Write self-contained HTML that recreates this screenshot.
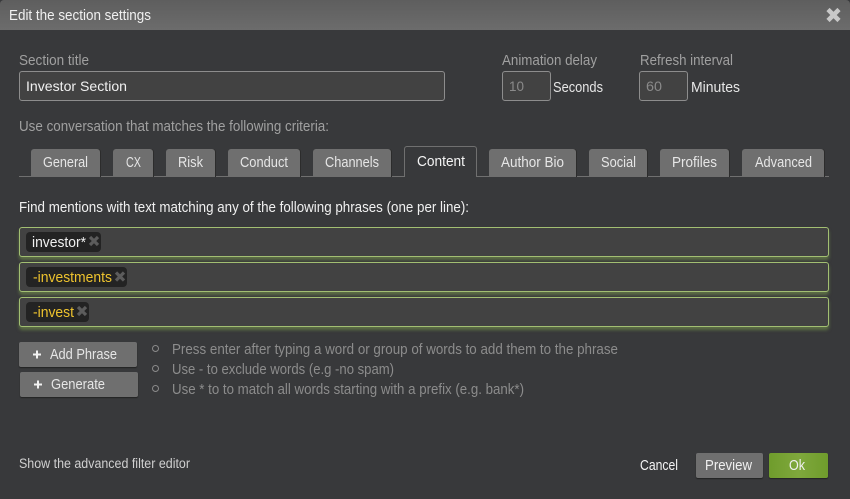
<!DOCTYPE html>
<html><head><meta charset="utf-8"><style>
html,body{margin:0;padding:0;width:850px;height:499px;overflow:hidden;background:#38393b}
.a{position:absolute;box-sizing:border-box}
.hd{left:0;top:0;width:850px;height:30px;background:linear-gradient(#5e5e5e,#6c6c6c);border-radius:4px 4px 0 0}
.in{border:1px solid #8d8d8d;background:#424242;border-radius:3px;height:30px;top:71px}
.tab{top:149px;height:28px;background:#6f6f6f;border-radius:3px 3px 0 0;box-shadow:1px 0 0 #2c2c2c}
.ph{left:19px;width:810px;height:30px;background:#424242;border:1px solid #a2bf72;border-radius:3px;box-shadow:0 3px 3px rgba(130,165,80,.5)}
.chip{left:26px;height:20px;background:#232323;border-radius:4px}
.btn{background:#6f6f6f;border-radius:2px;box-shadow:0 1px 1px #222}
.dot{width:7px;height:7px;border:1.5px solid #8a8a8a;border-radius:50%;left:152px}
svg{position:absolute;left:0;top:0}
text{font-family:"Liberation Sans",sans-serif;font-size:14.5px}
</style></head><body>
<div class="a hd"></div>
<div class="a in" style="left:19px;width:426px"></div>
<div class="a in" style="left:502px;width:49px"></div>
<div class="a in" style="left:639px;width:49px"></div>
<div class="a" style="left:19px;top:176px;width:810px;height:1px;background:#707070"></div>
<div class="a tab" style="left:31px;width:69px"></div>
<div class="a tab" style="left:113px;width:40px"></div>
<div class="a tab" style="left:166px;width:49px"></div>
<div class="a tab" style="left:228px;width:72px"></div>
<div class="a tab" style="left:313px;width:78px"></div>
<div class="a" style="left:404px;top:146px;width:73px;height:31px;background:#38393b;border:1px solid #707070;border-bottom:0;border-radius:3px 3px 0 0"></div>
<div class="a tab" style="left:489px;width:87px"></div>
<div class="a tab" style="left:589px;width:58px"></div>
<div class="a tab" style="left:660px;width:69px"></div>
<div class="a tab" style="left:742px;width:82px"></div>
<div class="a ph" style="top:227px"></div>
<div class="a ph" style="top:262px"></div>
<div class="a ph" style="top:297px"></div>
<div class="a chip" style="top:232px;width:75px"></div>
<div class="a chip" style="top:267px;width:101px"></div>
<div class="a chip" style="top:302px;width:63px"></div>
<div class="a btn" style="left:19px;top:342px;width:118px;height:25px"></div>
<div class="a btn" style="left:20px;top:372px;width:118px;height:25px"></div>
<div class="a dot" style="top:345px"></div>
<div class="a dot" style="top:365px"></div>
<div class="a dot" style="top:385px"></div>
<div class="a btn" style="left:696px;top:453px;width:67px;height:25px"></div>
<div class="a btn" style="left:769px;top:453px;width:59px;height:25px;background:linear-gradient(90deg,#6f9c2c,#7fa83c,#6f9c2c)"></div>
<svg width="850" height="499" viewBox="0 0 850 499">
<g stroke-linecap="butt" fill="none">
<path d="M828 9.500L839 20.500M839 9.500L828 20.500" stroke="#c8c8c8" stroke-width="4.500"/>
<path d="M90 237L98 245M98 237L90 245M116 272.500L124 280.500M124 272.500L116 280.500M78 307L86 315M86 307L78 315" stroke="#5c5c5c" stroke-width="3.200"/>
<path d="M33 354.500H41M37 350.500V358.500M34 384.500H42M38 380.500V388.500" stroke="#f2f2f2" stroke-width="2"/>
</g>
<g fill="#e6e6e6">
<text x="9" y="20" textLength="142" lengthAdjust="spacingAndGlyphs" fill="#f0f0f0">Edit the section settings</text>
<text x="19" y="65" textLength="70" lengthAdjust="spacingAndGlyphs" fill="#a0a0a0">Section title</text>
<text x="26" y="91" textLength="101" lengthAdjust="spacingAndGlyphs" style="font-size:14px" fill="#f0f0f0">Investor Section</text>
<text x="502" y="65" textLength="95" lengthAdjust="spacingAndGlyphs" fill="#a0a0a0">Animation delay</text>
<text x="640" y="65" textLength="93" lengthAdjust="spacingAndGlyphs" fill="#a0a0a0">Refresh interval</text>
<text x="509" y="91" textLength="15" lengthAdjust="spacingAndGlyphs" style="font-size:14px" fill="#8a8a8a">10</text>
<text x="646" y="91" textLength="16" lengthAdjust="spacingAndGlyphs" style="font-size:14px" fill="#8a8a8a">60</text>
<text x="553" y="92" textLength="50" lengthAdjust="spacingAndGlyphs">Seconds</text>
<text x="691" y="92" textLength="49" lengthAdjust="spacingAndGlyphs">Minutes</text>
<text x="19" y="131" textLength="310" lengthAdjust="spacingAndGlyphs" fill="#a0a0a0">Use conversation that matches the following criteria:</text>
<text x="43" y="167" textLength="45" lengthAdjust="spacingAndGlyphs">General</text>
<text x="126" y="167" textLength="15" lengthAdjust="spacingAndGlyphs">CX</text>
<text x="178" y="167" textLength="25" lengthAdjust="spacingAndGlyphs">Risk</text>
<text x="240" y="167" textLength="48" lengthAdjust="spacingAndGlyphs">Conduct</text>
<text x="325" y="167" textLength="54" lengthAdjust="spacingAndGlyphs">Channels</text>
<text x="417" y="166" textLength="48" lengthAdjust="spacingAndGlyphs" fill="#f4f4f4">Content</text>
<text x="501" y="167" textLength="63" lengthAdjust="spacingAndGlyphs">Author Bio</text>
<text x="601" y="167" textLength="35" lengthAdjust="spacingAndGlyphs">Social</text>
<text x="672" y="167" textLength="45" lengthAdjust="spacingAndGlyphs">Profiles</text>
<text x="755" y="167" textLength="57" lengthAdjust="spacingAndGlyphs">Advanced</text>
<text x="19" y="212" textLength="450" lengthAdjust="spacingAndGlyphs" fill="#f0f0f0">Find mentions with text matching any of the following phrases (one per line):</text>
<text x="32" y="247" textLength="54" lengthAdjust="spacingAndGlyphs" fill="#f0f0f0">investor*</text>
<text x="33" y="282" textLength="79" lengthAdjust="spacingAndGlyphs" fill="#eec32e">-investments</text>
<text x="33" y="317" textLength="41" lengthAdjust="spacingAndGlyphs" fill="#eec32e">-invest</text>
<text x="50" y="359" textLength="67" lengthAdjust="spacingAndGlyphs">Add Phrase</text>
<text x="51" y="389" textLength="54" lengthAdjust="spacingAndGlyphs">Generate</text>
<text x="172" y="354" textLength="446" lengthAdjust="spacingAndGlyphs" fill="#8c8c8c">Press enter after typing a word or group of words to add them to the phrase</text>
<text x="172" y="374" textLength="222" lengthAdjust="spacingAndGlyphs" fill="#8c8c8c">Use - to exclude words (e.g -no spam)</text>
<text x="172" y="394" textLength="352" lengthAdjust="spacingAndGlyphs" fill="#8c8c8c">Use * to to match all words starting with a prefix (e.g. bank*)</text>
<text x="19" y="468" textLength="171" lengthAdjust="spacingAndGlyphs" style="font-size:13.500px" fill="#d0d0d0">Show the advanced filter editor</text>
<text x="640" y="470" textLength="38" lengthAdjust="spacingAndGlyphs" fill="#f4f4f4">Cancel</text>
<text x="705" y="470" textLength="47" lengthAdjust="spacingAndGlyphs" fill="#f0f0f0">Preview</text>
<text x="789" y="470" textLength="16" lengthAdjust="spacingAndGlyphs" fill="#f0f0f0">Ok</text>
</g>
</svg>
</body></html>
